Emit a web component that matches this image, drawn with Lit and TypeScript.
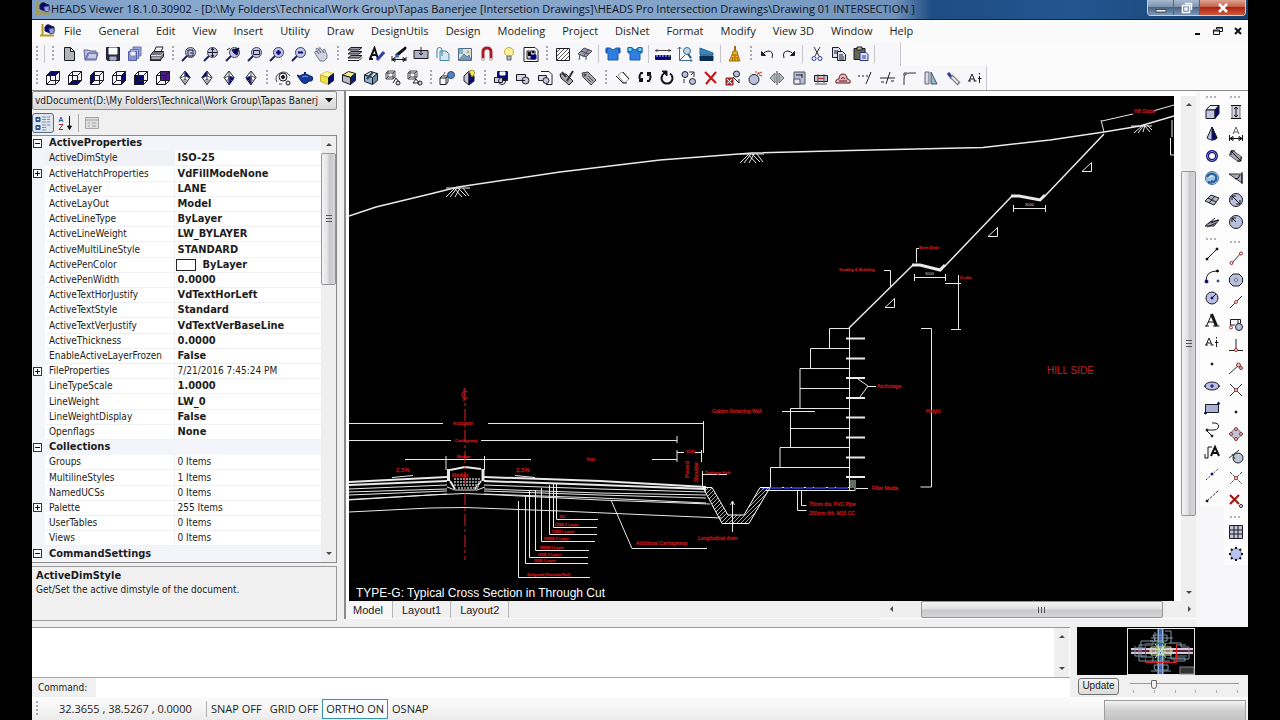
import { LitElement, html, svg, css, TemplateResult, SVGTemplateResult } from "lit";
import { customElement, property } from "lit/decorators.js";
import { classMap } from "lit/directives/class-map.js";

const NAVY = "#06067a";
const PALE = "#b9bfdf";
const INK = "#1c1c26";

type Icon = SVGTemplateResult;

const line = (d: string, color = INK, width = 1): Icon =>
  svg`<path d=${d} fill="none" stroke=${color} stroke-width=${width}></path>`;
const shape = (d: string, fill = PALE, stroke = INK): Icon =>
  svg`<path d=${d} fill=${fill} stroke=${stroke}></path>`;
const disc = (x: number, y: number, r: number, fill = PALE, stroke = INK): Icon =>
  svg`<circle cx=${x} cy=${y} r=${r} fill=${fill} stroke=${stroke}></circle>`;

const cube = (face: string, fill = NAVY): Icon => svg`
  ${shape(face, fill, fill)}
  ${line("M1.5 5.5h9v9h-9zM1.5 5.5l4-4h9v9l-4 4M10.5 5.5l4-4M5.5 1.5v9h9M5.5 10.5l-4 4")}`;
const gem = (face: string): Icon => svg`
  ${shape("M8 1l5 6.500-5 7-5-7z", "#fff")}${shape(face, NAVY, NAVY)}
  ${line("M8 1v14M3 8l5-2 5 2M5 11l3-2 3 2", "#55555f")}`;
const solid = (top: string, front: string, side: string): Icon => svg`
  ${shape("M1.500 5l6-3.500 7 2-5 4z", top)}${shape("M1.500 5l8 2.500v7l-8-3z", front)}${shape("M9.500 7.500l5-4v7l-5 4z", side)}`;
const lens = (inner: Icon): Icon => svg`
  ${line("M1 15l5-5", "#20205a", 2)}${disc(9.5, 6.5, 5, "#c3c8e6", "#3b3b76")}${inner}`;
const tinyA = svg`${line("M2 11l3-7 3 7M3 9h4M1 11h3M6.500 11h3")}${line("M12.500 6v7M11 8.500h3.500M12.500 3v1.500")}`;

const icons: Record<string, Icon> = {
  file: shape("M3.500 1.500h6l4 4v9h-10zM9.500 1.500v4h4", "#b4b4bc"),
  open: svg`${shape("M2 14L1 4h5l1 1h6v2", PALE, "#5c6296")}${shape("M2 14l3-7h10l-2 7z", "#8e96cc", "#5c6296")}${line("M5 3h1M8 2h1M11 3h1M6 9h7M5 11h8", "#fff")}`,
  save: svg`${shape("M1.500 1.500h13v13h-12l-1-1z", "#2c2c3c")}${shape("M4 2h8v6H4z", "#fff", "#fff")}${shape("M5 11h6v3H5z", "#a9aed0", "#a9aed0")}`,
  saveAll: svg`${shape("M6 1h8v9H6z", "#9ca5dc", "#6470ae")}${shape("M3.500 3.500h8v9h-8z", "#a9b1e2", "#6470ae")}${shape("M1.500 5.500h8v9h-8z", "#8791cf", "#5560a0")}${shape("M4 6h4v3H4z", "#eef", "#eef")}`,
  print: svg`${shape("M5 6l2-5h7l-2 5", "#fff")}${shape("M1.500 9l3-3.500h10v5l-3 3.500h-10z", "#76767e")}${line("M2 9.500h10l2.500-3M3 12h8M7 3.500h5", "#dcdce2")}${line("M1 14.500h11")}`,
  zoomWin: lens(line("M7 4h5v6H7zM9 7h2")),
  zoomAll: lens(line("M9.500 2v9M5 6.500h9M8 4l1.500-2L11 4M8 9l1.500 2L11 9")),
  zoomPrev: lens(svg`${shape("M7 4l7-2-2 7-3-2z", NAVY)}${line("M2 4l3-2")}`),
  zoomBox: lens(line("M6.500 4.500h6v4h-6z")),
  zoomIn: lens(line("M7 6.500h5M9.500 4v5", NAVY, 2)),
  zoomOut: lens(line("M7 6.500h5", NAVY, 2)),
  pan: shape("M3 9L1.500 6 3 5l3 3-3-5 1.500-1L8 7 5.500 2.500l1.500-1L11 7l-1-3 1.500-1L14 9v3l-3 3H7z", "#cfd1dd", "#777a8c"),
  layers: svg`${shape("M1 4l3-2.500h11L12 4z", "#9a9ba6")}${shape("M1 8l3-2.500h11L12 8z", "#9a9ba6")}${shape("M1 12l3-2.500h11L12 12z", "#9a9ba6")}${line("M1 14.500h11l3-3")}`,
  textStyle: svg`${line("M1 13L5.500 2 9 13M3 9h5M0 13h4", "#111", 2)}${line("M8 14l7-8", "#2f3fae", 3)}`,
  dimStyle: svg`${line("M5 9l10-8M7 9l8-7", "#111", 2)}${line("M4 10l4 0", "#4a6fc0", 3)}${line("M1 13.500h14M1 10v5M15 11v4M1 13.500l3-2v4zM15 13.500l-3-2v4z")}`,
  block: svg`${shape("M1 4.500h14v8H1z", "#aeb1c6")}${line("M8 1v8M6 7l2 2 2-2")}`,
  attach: svg`${shape("M5 5h6l3 3v6.500H5z", "#d4e6f2", "#4b86a8")}${line("M2 12V4q0-2.500 2.500-2.500T7 4v6", "#2d85a8")}`,
  image: svg`${shape("M1.500 2.500h13v12h-13z", "#d6e4ee", "#566a7c")}${shape("M2 14l5-6 3 3 2-2 2 5z", "#7d9db4", "#5c7c94")}${line("M3 8V3q1-2 2 0v5", "#2d85a8")}${disc(11, 6, 1, "#f6cf59", "#c9a030")}`,
  magnet: svg`${line("M4 14V6q0-4 4-4t4 4v8", "#a3202a", 3)}${line("M4 12v3M12 12v3", "#d7c7cb", 3)}`,
  bulb: svg`${disc(8, 6, 4.5, "#fff39a", "#c4a93c")}${shape("M6 10h4v4H6z", "#b3b7c9", "#666")}`,
  report: svg`${shape("M1 1.500h11l3 3v11H1z", "#fff")}${shape("M4 5h8v8H4z", "#c6cae6")}${shape("M8 9h5v4H8z", NAVY, NAVY)}${line("M5 7h3M5 9h3M9 6h2", "#000", 2)}`,
  hatch: svg`${shape("M1.500 2.500h13v12h-13z", "#fff")}${line("M2 6l3-3M2 10l7-7M2 14L13 3M6 14l8-8M10 14l4-4", "#555")}`,
  plane: svg`${shape("M1 8l6-6 8 3-6 6z", "#9799a8", "#4c4c5c")}${line("M4 5l8 3M6 11L12 3M3 9l-1 5M9 11v3", "#4c4c5c")}`,
  shirt: svg`${shape("M1 2h4l3 2 3-2h4v5h-2v7H3V7H1z", "#2e7fe0", "#1f5ba8")}${line("M3 3l-2 3M13 3l2 3", "#173f80")}`,
  shirt2: svg`${shape("M1 2h4l3 2 3-2h4v5h-2v7H3V7H1z", "#2e7fe0", "#1f5ba8")}${shape("M1 1.500h4v4H1zM11 1.500h4v4h-4z", "#67d9e8", "#1f5ba8")}`,
  ruler: svg`${line("M0 4.500h16M2 3v3M14 3v3", "#444")}${shape("M.5 9.500h15v4H.5z", NAVY)}${line("M2 9v2M5 9v2M8 9v2M11 9v2M14 9v2", "#b7c0ff")}`,
  ucs: svg`${line("M2.500 1v13.500H15M.5 3l2-2 2 2M13 12.500l2 2-2 2M3 14l5-5", "#3b6e93")}${disc(10, 5, 3.5, "#bcd4e6", "#3b6e93")}${line("M11 8l3 4", "#35506c", 2)}`,
  hull: svg`${shape("M1 2l13 5v2H1z", "#3d84b8", "#2b6a98")}${shape("M1 10h13v4.500H1z", "#0b2f55", "#0b2f55")}`,
  broom: svg`${line("M8 0v6", "#a06818", 2)}${shape("M6 5h4l1 4 2 6H2l3-6z", "#f0b429", "#a8720f")}${line("M5 9h6M6 11l-1 4M8 10v5M10 11l1 4", "#8c5a0c")}`,
  undo: svg`${line("M13 12q2-7-4-7-3 0-6 4")}${shape("M2.500 5.500v4h4z", "#223")}`,
  redo: svg`${line("M3 12q-2-7 4-7 3 0 6 4")}${shape("M13.500 5.500v4h-4z", "#223")}`,
  cut: svg`${line("M5 1l5 9M11 1L6 10", "#333")}${disc(5, 12.5, 2, "#fff", "#23318f")}${disc(11, 12.5, 2, "#fff", "#23318f")}`,
  copy: svg`${shape("M1.500 1.500h6l2 2v8h-8z", "#dfe1ea")}${shape("M6.500 5.500h5l3 3v6h-8z", "#dfe1ea")}${line("M3 5h4M3 7h3M8 9h4M8 11h5M8 13h5")}`,
  paste: svg`${shape("M1 2.500h11v11H1z", "#66684f")}${shape("M4 1h5v3H4z", "#b7b99a")}${shape("M7 6.500h6l2 2v6H7z", "#dfe4ff", "#27318a")}${line("M9 10h4M9 12h4", "#27318a")}`,

  cubeTop: cube("M1.500 5.500l4-4h9l-4 4z"),
  cubeBottom: cube("M1.500 14.500l4-4h9l-4 4z"),
  cubeLeft: cube("M1.500 5.500l4-4v9l-4 4z"),
  cubeRight: cube("M10.500 5.500l4-4v9l-4 4z"),
  cubeFront: cube("M1.500 5.500h9v9h-9z"),
  cubeBack: cube("M5.500 1.500h9v9h-9z", "#4a1a8c"),
  gemNE: gem("M8 1l5 6.500-5-1.500z"),
  gemNW: gem("M8 1L3 7.500 8 6z"),
  gemSE: gem("M8 6l5 2-5 7z"),
  gemSW: gem("M8 6L3 8l5 7z"),
  orbit: svg`${line("M2 12Q-1 6 5 3t10 3M4 14h3", "#444")}${disc(8, 7, 4, "#e4e4ea")}${disc(8, 7, 1.5, "#111")}${disc(13, 13, 2, "#ddd")}`,
  teapot: svg`${shape("M2 8l-2-3 3 1q5-4 10 0 3 0 3 3-1 3-4 2-4 5-8 0z", "#183a9a", "#0b1f66")}${line("M5 7q3-2 6 0", "#6c9bea")}${line("M7 3h2", "#0b1f66", 2)}`,
  boxYellow: svg`${shape("M1.500 5l6-3.500 7 2-5 4z", "#fff9a8", "#d8c840")}${shape("M1.500 5l8 2.500v7l-8-3z", "#f2df4e", "#c8b430")}${shape("M9.500 7.500l5-4v7l-5 4z", NAVY)}`,
  boxBlue: solid("#f4ee86", "#b7b9c4", "#0c1c77"),
  boxPen: svg`${solid("#cfe0ea", "#8db4c9", "#6e8ea8")}${line("M4 9l6-7", "#2b4250", 2)}`,
  wire1: svg`${line("M1 3h7v6H1zM1 3l2-2h7L8 3M10 1v6L8 9M3 1v6h7M3 7L1 9", "#444")}${disc(13, 13, 2, "#ddd")}${line("M8 13l3-5 3 4")}`,
  wire2: svg`${line("M1 3h7v6H1zM1 3l2-2h7L8 3M10 1v6L8 9M3 1v6h7M3 7L1 9", "#444")}${disc(13, 13, 2, "#ddd")}${line("M6 13l3-4 3 4z")}`,
  render: svg`${shape("M1 8h6v6.500H1zM1 8l2-2h6v6l-2 2.500M7 8l2-2", "#fff")}${disc(12, 5, 3.5, "#4d86c6", "#274f80")}${line("M11 1l4 3M4 6l2-4", "#b64545")}`,
  shade: svg`${shape("M8 1L3 6v5l5 4z", "#c6c8d6")}${shape("M8 3l5 3v5l-5 4z", NAVY)}${shape("M8 1l4-1 2 3-3 4z", "#f7e660", "#9a8c1e")}`,
  saveBlock: svg`${shape("M4.500 1.500h10v9h-10z", NAVY)}${shape("M7 2h5v3H7z", "#fff", "#fff")}${shape("M1.500 7.500h8v5h-8z", "#cfd1e0")}${disc(9, 11, 3.5, "none")}`,
  blockAdd: svg`${shape("M1.500 4.500h9v6h-9z", "#d4d6e2")}${disc(10.5, 10.500, 3.5, "#c4c6d8")}${line("M1 10.500h9")}`,
  blockCopy: svg`${shape("M4 1.500h8l3 3v10H9", "#fff")}${shape("M1.500 5.500h8v5h-8z", "#d4d6e2")}${disc(9, 10.5, 3, "#c4c6d8")}`,
  tagEdit: svg`${shape("M1 4h6l7 7-4 4-8-7z", "#a5a6b1")}${line("M8 11l6-10M3 2l4 5", "#333", 2)}`,
  tag: svg`${shape("M1 3l6-1 8 8-5 5-8-8z", "#a5a6b1", "#444")}${disc(4, 5, 1, "#fff")}${line("M7 6l5 5M6 8l4 4", "#555")}`,

  erase: svg`${shape("M3 5l4-3 7 7-5 4z", "#fff", "#999")}${line("M1 6l7 7h4M8 2l6 7")}`,
  rotSwap: line("M6 3H4Q1 7 4 11M2 11h3V8M10 11h2q3-4 0-8M14 3h-3v3", "#111", 2),
  rotate: svg`${line("M11 3.500A5.500 5.500 0 1 1 5 3.500", "#111", 2)}${shape("M3 1h5v5z", "#111")}`,
  moveObj: svg`${disc(4, 4.500, 3)}${disc(11.500, 11.500, 3)}${line("M8 2h5v5M13 2l-3 3M3 9v4", "#333")}`,
  delete: line("M2 2l11 11M13 2L3 14", "#c01616", 2),
  delCopy: svg`${disc(11.500, 4, 3)}${line("M8 7l6 6M14 9v4")}${shape("M1 8h7v7H1z", "#c33", "#822")}${line("M2 9l5 5M7 9l-5 5", "#fff")}`,
  explode: svg`${disc(7, 9.5, 5)}${line("M10 5l2-3M11 4l4-2M12 5l3 1M9 3V1", "#b53a20")}`,
  mirror: svg`${shape("M6 3v10L1 8z", "#a9bfb8", "#667")}${shape("M10 3v10l5-5z", "#a9bfb8", "#667")}${line("M8 1v14", "#333")}`,
  scale: svg`${shape("M3 2h11v12H3z", "#b5bdd0", "#556")}${shape("M3 9h6v5H3z", "#e8ebf4", "#556")}${line("M11 4v4M5 5h6")}`,
  stretch: svg`${shape("M1.500 5.500h13v6h-13z", "#c0c1ce")}${line("M5 4v9M11 4v9M2 14h12", "#555")}${line("M5 8.500h6", "#b33")}`,
  offset: svg`${shape("M1 13q-1-4 3-4 0-5 4-5t4 5q4 0 3 4z", "#e8b8bc", "#5b1c24")}${line("M4 11h8M6 9q2-3 4 0", "#5b1c24")}`,
  trim: line("M1 6h2M5 6h2M9 6h2M9 14l5-12", "#222", 1),
  extend: line("M1 8h15M7 14l4-12M2 12h3M12 11h3", "#222", 1),
  fillet: line("M3 15V9q0-6 6-6h6M3 3h3M3 3v3", "#333"),
  chamfer: svg`${shape("M2 2h4v12H2z", "#d7dae6", "#667")}${shape("M8 2l6 12H8z", "#8fb8c8", "#456")}`,
  pencil: svg`${line("M3 3l4 5", "#2b3c9b", 3)}${line("M6 6l8 8", "#777", 4)}${line("M7 7l6 6", "#e8e8ee", 2)}`,
  attrText: tinyA,

  box3d: svg`${shape("M2 6l4-4.500h9l-4 4.500z", "#e8eaf6")}${shape("M2 6h9v8.500H2z", "#c2c6e4")}${shape("M11 6l4-4.500v8l-4 5z", NAVY)}`,
  cone: svg`${shape("M8 1L3 12q5 4 10 0z", "#b9bfdf")}${shape("M8 1l5 11q-2 2-5 2z", NAVY)}`,
  torus: svg`<circle cx="8" cy="8" r="4.500" fill="none" stroke=${NAVY} stroke-width="3"></circle><circle cx="8" cy="8" r="4.500" fill="none" stroke="#8c93d2" stroke-width="1"></circle>`,
  sphere: svg`${disc(8, 8, 6.500, "#9fc4e4", "#41729e")}${line("M3 7q2-4 6-3t3 5-5 2M4 12q5 2 9-3", "#2a5d92", 2)}${line("M5 8q1-3 4-2", "#eef7ff")}`,
  mesh: svg`${shape("M1 9l6-6 8 3-5 7z", "#b4b6c4")}${line("M4 6l8 4M5 11l6-7")}`,
  ruled: svg`${shape("M1 12l5-4 9-2-5 6z", "#a8aab6")}${line("M4 10l7-6M7 9l7-3M3 13l9-4")}`,
  segment: svg`${line("M3 13L13 3")}${disc(3, 13, 1, "#000", "#000")}${disc(13, 3, 1, "#000", "#000")}`,
  arc: svg`${line("M2 13Q2 3 13 3")}${disc(2.500, 13.500, 1.500, NAVY, NAVY)}${disc(14, 13, 1, "#34408f", "#34408f")}${disc(13.500, 3, 1, "#000", "#000")}`,
  circle: svg`${disc(8, 8, 6)}${line("M8 8l4-4", NAVY)}${disc(8, 8, 1, NAVY, NAVY)}`,
  letterA: svg`${line("M2.500 14L7.500 2.500M1 14h4M9 14h6.500M4 10h7", "#111", 1)}${line("M7.500 2l5 12", "#111", 3)}`,
  point: disc(8, 8, 1, "#111", "#111"),
  ellipse: svg`<ellipse cx="8" cy="8" rx="7" ry="4" fill=${PALE} stroke="#1c1c26"></ellipse>${line("M8 6v4M6 8h4", NAVY)}${disc(1, 8, 0.5)}${disc(15, 8, 0.5)}`,
  rect: svg`${shape("M1.500 4.500h13v8h-13z", "#aab2d2")}${disc(14.500, 3.500, 1, NAVY, NAVY)}${disc(1.500, 13, 1, NAVY, NAVY)}`,
  poly: svg`${line("M8 1h3q5 1 3 5-1 2-4 2H2l6 6")}${disc(3, 8, 1, "#111")}${disc(8, 14, 1, "#111")}`,
  mtext: svg`${line("M1 10v4h3V3h4", "#111", 1)}${line("M7 12l4-9 4 9M8 9h6", "#111", 2)}`,
  xline: svg`<path d="M2 14L15 2" stroke="#333" stroke-dasharray="2 1.500"></path>${disc(8, 8, 1, NAVY, NAVY)}`,
  ray: svg`<path d="M3 13L15 2" stroke="#333" stroke-dasharray="3 1"></path>${disc(3, 13, 1, "#111", "#111")}`,

  dimV: svg`${shape("M4 1.500h8v13H4z", "#cfd1e0", "#777")}${line("M3 1.500h10M3 14.500h10M8 3v10M6 5l2-2 2 2M6 11l2 2 2-2", "#111")}`,
  dimH: svg`${line("M5 8l3-7 3 7M6 6h4", "#666")}${line("M1.500 9v6M14.500 9v6M2 12.500h12", "#111")}${line("M2 12.500l3-2v4zM14 12.500l-3-2v4z", "#111")}`,
  dimA: svg`${shape("M4 2l10 7-3 5L1 7z", "#a5a6b4", "#666")}${line("M3 3l10 10", "#111")}${line("M3 3h4M3 3v4M13 13H9M13 13V9", "#111")}`,
  dimAng: svg`${shape("M1 4h13v9z", "#a9abbb", "#333")}${line("M14 2v12M7 9q4 0 5-4", "#111")}`,
  dimDia: svg`${disc(8, 8, 6.5)}${line("M4 4l8 8M4 4h4M4 4v4M12 12H8M12 12V8", "#111")}`,
  dimRad: svg`${disc(8, 8, 6.5)}${line("M4 4l4 4M4 4h4M4 4v4", "#111")}`,
  snapEnd: svg`${line("M4 13l9-10", "#333")}${disc(3.500, 13, 1.5, "#fff", "#922")}${disc(13, 3.500, 1.500, "#fff", "#922")}`,
  snapCen: svg`${shape("M5 2h6l3.500 3.500v5L11 14H5l-3.500-3.500v-5z")}${disc(8, 8, 1.500, "#fff", "#666")}`,
  snapMid: svg`${line("M2 14L14 2", "#333")}${disc(8, 8, 1.5, "#f0d8c8", "#a55")}`,
  snapIns: svg`${line("M2.500 9V3.500h10v4M2 9h5M10 4v5")}${disc(3, 11.500, 1.500, "#fff", "#a33")}${disc(11, 11, 3.500)}`,
  snapPer: svg`${line("M8 1v10M1 12.500h14", "#222")}${disc(8, 12, 1.500, "#fff", "#922")}`,
  snapNear: svg`${line("M1 14l10-9", "#333")}${disc(10.500, 5, 2, "#e0c4c8", "#833")}${disc(13, 8, 1.500, "#e0c4c8", "#833")}`,
  snapInt: svg`${line("M2 2l12 12M14 2L2 14", "#333")}${disc(8, 8, 1.500, "#f6ead8", "#a33")}`,
  snapQuad: svg`${shape("M8 1.500l6.500 6.500L8 14.500 1.500 8z", "#c2c0d2", "#666")}${[[8, 3], [3, 8], [13, 8], [8, 13]].map(([x, y]) => disc(x, y, 1.5, "#e8d0d4", "#833"))}`,
  snapTan: svg`${disc(10, 10, 5, "#b9c7d6")}${line("M1 10L11 2M4 6l3 5", "#333")}`,
  snapApp: svg`<path d="M2 2l12 12M14 2L2 14" stroke="#444" stroke-dasharray="3 1"></path>${disc(8, 8, 1.500, "#f6ead8", "#a33")}`,
  snapOff: svg`${line("M2 3l9 9M11 3l-9 9", "#a01212", 2)}${disc(13, 14, 1.5, "#fff")}`,
  grid: svg`${shape("M1.500 1.500h13v13h-13z", "#c3c5d8")}${line("M6 2v12M10 2v12M2 6h12M2 10h12")}`,
  osnap: svg`${disc(8, 8, 5.500, "#b9c3ee", "#8d96c4")}${[0, 45, 90, 135, 180, 225, 270, 315].map(
    (a) => svg`<rect x="7" y="1" width="2" height="2" fill="#111" transform="rotate(${a} 8 8)"></rect>`)}`,
  categories: svg`${shape("M1 2.500h4v4H1zM1 10.500h4v4H1z", "#3f6aa8", "#254a80")}${line("M7 2h4M7 4.500h4M7 7h4M7 10h4M7 12.500h4M7 15h4M12 2h3M12 4.500h3M12 7h3M12 10h3", "#7690b4")}${line("M2 4.500h2M2 12.500h2", "#fff")}`,
  alpha: svg`${line("M2 7l2-5 2 5M3 5.500h2", "#2f55b8")}${line("M2 9.500h4L2 14.500h4", "#a8263a")}${line("M12.500 1v13", "#111", 1)}${shape("M10.500 11h4l-2 3.500z", "#111")}`,
  pages: svg`${shape("M1.500 2.500h13v11h-13z", "#dedede", "#a4a4a4")}${line("M1 5h14M4 8h2M8 8h4M4 11h2M8 11h4", "#a4a4a4")}`,
  logo: svg`${line("M3.500 1v11.500M1 12.500h14", "#b89a1c", 2)}${shape("M6 4q2-4 6-1l3 1v5l-4 1-5-2z", NAVY)}${shape("M10 6l5-1v5l-4 1z", "#8fa0dd", "#46509a")}`,
};

const glyph = (name: string): TemplateResult =>
  html`<svg viewBox="0 0 16 16" width="16" height="16" aria-hidden="true">${icons[name]}</svg>`;

@customElement("tool-strip")
class ToolStrip extends LitElement {
  @property({ attribute: false }) items: string[] = [];
  @property({ type: Boolean, reflect: true }) vertical = false;

  static styles = css`
    :host { display: flex; align-items: center; }
    :host([vertical]) { flex-direction: column; background: #fcfcfd; }
    button {
      width: 22px; height: 22px; padding: 3px; border: 0; background: none; display: block; flex: none;
    }
    svg { display: block; }
    .grip { flex: none; box-sizing: border-box; width: 10px; height: 16px; padding: 0 4px; }
    .grip.wide { width: 12px; padding: 0 5px; }
    .grip::before {
      content: ""; display: block; width: 2px; height: 16px;
      background: repeating-linear-gradient(#a9a9ad 0 2px, transparent 2px 4px);
    }
    :host([vertical]) .grip { width: 12px; height: 10px; padding: 5px 0 3px; }
    :host([vertical]) .grip.wide { height: 14px; padding: 8px 0 4px; }
    :host([vertical]) .grip::before {
      width: 11px; height: 2px;
      background: repeating-linear-gradient(90deg, #b4b4b8 0 2px, transparent 2px 4px);
    }
    .bar { width: 1px; height: 18px; background: #c4c4c9; margin: 0 3px 0 2px; flex: none; }
  `;

  render() {
    return this.items.map((item) =>
      item === ":" ? html`<span class="grip"></span>`
      : item === "::" ? html`<span class="grip wide"></span>`
      : item === "|" ? html`<span class="bar"></span>`
      : html`<button type="button" aria-label=${item}>${glyph(item)}</button>`);
  }
}

@customElement("scroll-rail")
class ScrollRail extends LitElement {
  @property({ type: Boolean, reflect: true }) horizontal = false;
  @property({ type: Boolean }) idle = false;
  @property({ type: Number }) before = 0;
  @property({ type: Number }) size = 1;
  @property({ type: Number }) after = 1;

  static styles = css`
    :host { display: flex; flex-direction: column; width: 15px; background: #efeff0; flex: none; }
    :host([horizontal]) { flex-direction: row; width: auto; height: 17px; }
    button { border: 0; background: none; padding: 0; width: 15px; height: 17px; flex: none; display: grid; place-items: center; }
    .space { min-height: 0; min-width: 0; }
    .thumb {
      box-sizing: border-box; border: 1px solid #969699; border-radius: 2px; display: grid; place-items: center;
      background: linear-gradient(90deg, #f4f4f4, #e2e2e3 45%, #c9c9cc 55%, #d6d6d8);
    }
    :host([horizontal]) .thumb { background: linear-gradient(#f4f4f4, #e2e2e3 45%, #c9c9cc 55%, #d6d6d8); }
    .ribs { width: 6px; height: 8px; background: repeating-linear-gradient(#555 0 1px, transparent 1px 3px); }
    :host([horizontal]) .ribs { width: 8px; height: 6px; background: repeating-linear-gradient(90deg, #555 0 1px, transparent 1px 3px); }
  `;

  render() {
    const [a, b] = this.horizontal ? ["M5 0v6L2 3z", "M2 0v6l3-3z"] : ["M0 5h6L3 2z", "M0 2h6L3 5z"];
    const arrow = (d: string) => html`<svg width="6" height="7" aria-hidden="true"><path d=${d} fill="#4a4a4e"></path></svg>`;
    return html`
      <button type="button" aria-label="Scroll back">${arrow(a)}</button>
      <span class="space" style="flex:${this.before}"></span>
      ${this.idle ? "" : html`<span class="thumb" style="flex:${this.size}"><span class="ribs"></span></span>`}
      <span class="space" style="flex:${this.after}"></span>
      <button type="button" aria-label="Scroll forward">${arrow(b)}</button>`;
  }
}

const white = (d: string, width = 1) => svg`<path class="ln" d=${d} stroke-width=${width}></path>`;
const note = (x: number, y: number, text: string, size = 5) =>
  svg`<text class="note" x=${x} y=${y} font-size=${size}>${text}</text>`;

const layerNotes: [number, number, number, number, number, string][] = [
  [556.5, 483, 519.5, 598, 560, "BC"],
  [553.5, 484, 527.5, 597, 555, "DBM II Layer"],
  [549.5, 485, 534.5, 597, 552, "DBM I Layer"],
  [541.5, 488, 541.5, 595, 544, "WMM II Layer"],
  [535.5, 490, 550.5, 589, 540, "WMM I Layer"],
  [529.5, 491, 557.5, 588, 538, "GSB II Layer"],
  [525.5, 496, 563.5, 588, 534, "GSB I Layer"],
  [518.5, 501, 577.5, 590, 527, "Subgrade(Granular/Soil)"],
];
const groundMark = (x: number, y: number) =>
  white(`M${x - 12} ${y + 2}h24M${x - 12} ${y + 11}l9-9M${x - 8} ${y + 11}l7-9M${x - 3} ${y + 11}l5-9M${x - 4} ${y + 2}l8 9M${x} ${y + 2}l8 8M${x + 5} ${y + 2}l6 8`);
const roadLayers: [number, number, number, number][] = [
  [482, 477, 487, 2], [485, 481, 489, 2], [489, 485, 492, 1], [492, 489, 495, 1],
  [495, 491, 498, 1], [500, 494, 503, 1],
];

const drawing = svg`
  ${white("M349 216L376 207 430 194 458 187 560 172 660 160 752 153 850 150.500 983 147.500 1050 140 1104 132 1140 126 1174 116", 1.500)}
  ${groundMark(458, 186)}${groundMark(752, 152)}
  ${white("M1134 133l9-8M1138 133l6-8M1143 132l2-7M1131 126h21M1144 125l6 7M1147 125l5 5")}
  ${white("M1101 120l3 12M1102 121l31-7M1153 111l21-6M1172 120v17M1170.500 138v17h4")}
  ${note(1134, 113, "Hill Slope")}
  ${white("M849 328L913 265M945 266L1012 196M1045 196L1104 134", 1.500)}
  ${white("M912 265h8l20 5 5-5M1011 196h8l21 4 5-5", 3)}
  ${white("M1082 171.500h9.500v-9zM988 236.500h9.500v-9zM885 307.500h9.500v-9z")}
  ${white("M1014 208.500h31M1013.500 205v7M1045.500 205v7M915 277.500h30M914.500 274v7M945.500 274v7")}
  <text class="dim" x="1025" y="206" font-size="4">3000</text>
  <text class="dim" x="925" y="275" font-size="4">3000</text>
  ${note(839, 271, "Seeding & Mulching", 4)}${white("M884 270.500h6.500v16")}
  ${note(919, 249, "Berm Drain", 4)}${white("M919 248.500h-2.500v14")}
  ${note(960, 279, "H =4m", 4)}${white("M958.500 275v54M945 283.500h16M951 329.500h10M921 328.500h10.500v158.500h-11")}
  ${note(926, 413, "Height", 5)}
  <text class="hill" x="1047" y="374" font-size="10">HILL SIDE</text>
  ${white("M849.500 328v162M829.500 348v-19.500h20M810.500 368v-19.500h39M800 408v-39.500h49.500M800 388.500h49M790.500 447v-38.500h59M790 428.500h59M780 467v-19.500h69M770.500 487v-19.500h79")}
  ${white("M846 338.500h19M846 358.500h19M846 378h19M846 398h19M846 417.500h19M846 437.500h19M846 457.500h19M846 477h19", 2)}
  ${white("M858 379l10 7-8 11M868 386.500h8")}${note(877, 388, "Anchorage", 5)}
  ${note(712, 413, "Gabion Retaining Wall", 5)}${white("M782 411.500h33")}
  ${white("M761 487.500h88M766 490.500h89v-6M856 488.500h12")}
  <path d="M762 489l4-1h84" fill="none" stroke="#2432b0" stroke-width="2" stroke-dasharray="7 1 12 2"></path>
  <rect x="850" y="480" width="6" height="8" fill="#5e6e60"></rect>
  ${note(872, 490, "Filter Media", 5)}
  ${white("M797.500 491v19.500h9M801.500 491v14.500h5")}
  ${note(809, 506, "75mm dia. PVC Pipe", 5)}${note(809, 515, "250mm thk. M15 CC", 5)}
  ${white("M349 423.500h94M488 423.500h216M703.500 421v32M349 440.500h102M481 440.500h196M677 436v7M405 459.500h126M446 456v14M484.500 456v14M652 459.500h25M677 450v12M677 452.500h7M695 452.500h6M701.500 450v12")}
  ${note(453, 425, "ROADWAY", 4)}${note(455, 442, "Carriageway", 4)}${note(457, 458, "Median", 4)}${note(586, 461, "7500", 4)}${note(686, 453, "1500", 4)}
  <text class="note" transform="translate(689 478) rotate(-90)" font-size="6">Paved</text>
  <text class="note" transform="translate(698 482) rotate(-90)" font-size="5">Shoulder</text>
  ${note(396, 472, "2.5%", 6)}${note(516, 472, "2.5%", 6)}${white("M392 477.500l21-2M515 475.500l20 2")}
  ${roadLayers.map(([l, m, r, w]) => white(`M349 ${l}L${447} ${m}M484 ${m}L600 ${m + 4}L706 ${r}`, w))}
  ${white("M349 499.500L430 495 465 493.500 500 495 600 500 710 504M349 512L430 508 465 507.500 560 511 650 515 722 518M447 487l8 3h22l8-3")}
  ${white("M448.500 469v12M483 469v12", 3)}${white("M450 470l15-3 16 2M450 481l5 8M481 481l-6 8", 2)}
  <path d="M454 479h25v3h-24v3h23v3h-20" fill="none" stroke="#8b8b8b" stroke-width="2" stroke-dasharray="2 1"></path>
  ${note(452, 477, "Median", 5)}
  ${layerNotes.map(([x, top, bottom, end, tx, text]) => svg`${white(`M${x} ${top}V${bottom}H${end}`)}${note(tx, bottom - 2, text, 4)}`)}
  <path d="M465 388V560" stroke="#e02020" fill="none" stroke-dasharray="12 3 3 3"></path>
  <path d="M468 392q-6-2-6 3t6 3M464 388v14" stroke="#c01818" fill="none"></path>
  ${white("M611 500L632 548.500H707")}${note(636, 545, "Additional Carriageway", 5)}
  ${white("M702.500 471v16M703 474.500h24")}${note(705, 474, "Drainage Hole", 4)}
  <path d="M703 487.500H712L728 515H744L760 487.500H770L749 523.500H722z" fill="url(#dash)" stroke="#fff"></path>
  ${white("M732.500 501v31M730.500 505l2-4 2 4")}${note(698, 540, "Longitudinal drain", 5)}
`;

type Row = [string, string?, ("group" | "plain" | "more" | "color")?, boolean?];
const rows: Row[] = [
  ["ActiveProperties", undefined, "group"],
  ["ActiveDimStyle", "ISO-25"],
  ["ActiveHatchProperties", "VdFillModeNone", "more"],
  ["ActiveLayer", "LANE"],
  ["ActiveLayOut", "Model"],
  ["ActiveLineType", "ByLayer"],
  ["ActiveLineWeight", "LW_BYLAYER"],
  ["ActiveMultiLineStyle", "STANDARD"],
  ["ActivePenColor", "ByLayer", "color"],
  ["ActivePenWidth", "0.0000"],
  ["ActiveTextHorJustify", "VdTextHorLeft"],
  ["ActiveTextStyle", "Standard"],
  ["ActiveTextVerJustify", "VdTextVerBaseLine"],
  ["ActiveThickness", "0.0000"],
  ["EnableActiveLayerFrozen", "False"],
  ["FileProperties", "7/21/2016 7:45:24 PM", "more", true],
  ["LineTypeScale", "1.0000"],
  ["LineWeight", "LW_0"],
  ["LineWeightDisplay", "False"],
  ["Openflags", "None"],
  ["Collections", undefined, "group"],
  ["Groups", "0 Items", "plain"],
  ["MultilineStyles", "1 Items", "plain"],
  ["NamedUCSs", "0 Items", "plain"],
  ["Palette", "255 Items", "more", true],
  ["UserTables", "0 Items", "plain"],
  ["Views", "0 Items", "plain"],
  ["CommandSettings", undefined, "group"],
];

const menus = ["File", "General", "Edit", "View", "Insert", "Utility", "Draw", "DesignUtils", "Design",
  "Modeling", "Project", "DisNet", "Format", "Modify", "View 3D", "Window", "Help"];

const standardTools = [":", "|", ":", "file", "open", "save", "saveAll", "print", ":", "zoomWin", "zoomAll", "zoomPrev",
  "zoomBox", "zoomIn", "zoomOut", "pan", "::", "layers", "textStyle", "dimStyle", "block", "attach", "image", "magnet",
  "bulb", "report", ":", "hatch", "plane", "|", "shirt", "shirt2", "|", "ruler", "ucs", "hull", "|", "broom", ":",
  "undo", "redo", "|", "cut", "copy", "paste", "|"];
const modifyTools = [":", "cubeTop", "cubeBottom", "cubeLeft", "cubeRight", "cubeFront", "cubeBack", "gemNE", "gemNW",
  "gemSE", "gemSW", ":", "orbit", "teapot", "boxYellow", "boxBlue", "boxPen", "wire1", "wire2", ":",
  "render", "shade", ":", "saveBlock", "blockAdd", "blockCopy", "tagEdit", "tag", "::", "erase", "rotSwap", "rotate",
  "moveObj", "delete", "delCopy", "explode", "mirror", "scale", "stretch", "offset", "trim", "extend", "fillet",
  "chamfer", "pencil", "attrText"];
const drawTools = [":", "box3d", "cone", "torus", "sphere", "mesh", "ruled", ":", "segment", "arc", "circle", "letterA",
  "attrText", "point", "ellipse", "rect", "poly", "mtext", "xline", "ray"];
const snapTools = [":", "dimV", "dimH", "dimA", "dimAng", "dimDia", "dimRad", "::", "snapEnd", "snapCen", "snapMid",
  "snapIns", "snapPer", "snapNear", "snapInt", "point", "snapQuad", "snapTan", "snapApp", "snapOff", ":", "grid", "osnap"];

@customElement("app-root")
class AppRoot extends LitElement {
  static styles = css`
    :host {
      display: block; height: 100vh; padding: 0 32px; box-sizing: border-box; background: #000; overflow: hidden;
      font: 11px/16px "Open Sans", "Noto Sans", sans-serif; color: #1c1c20;
    }
    * { box-sizing: border-box; }
    button, input, select { font: inherit; color: inherit; margin: 0; border-radius: 0; }
    svg { display: block; }
    .window { height: 100%; display: flex; flex-direction: column; background: #f0f0f0; }

    .title {
      height: 20px; flex: none; display: flex; align-items: flex-start; padding: 0 2px; gap: 1px;
      border-bottom: 1px solid #12233c;
      background: linear-gradient(90deg, #7f9fc6, #91aed0 25%, #7fa0c6 60%, #6f92bb 71%, #1f4c83 74%, #235690 86%, #16406f);
    }
    .title h1 { margin: 0; font-size: 11px; line-height: 18px; font-weight: 400; flex: 1; white-space: nowrap; overflow: hidden; color: #10131c; }
    .title svg { margin-top: 1px; }
    .captions { display: flex; border: 1px solid #c7d3e2; border-top: 0; border-radius: 0 0 4px 4px; overflow: hidden; height: 16px; }
    .captions button {
      border: 0; border-right: 1px solid #50647f; padding: 0; width: 26px; display: grid; place-items: center;
      background: linear-gradient(#a9bad0, #7d93b0 45%, #4a6486 50%, #7d97b6);
    }
    .captions .close { width: 45px; border: 0; background: linear-gradient(#dba293, #c8604b 45%, #ac2313 50%, #cf5a3c); }

    .menu { height: 22px; flex: none; display: flex; align-items: center; background: #fafafb; padding: 0 0 0 7px; }
    .menu button { border: 0; background: none; padding: 0 8px 0 9px; line-height: 22px; white-space: nowrap; }
    .menu .items { display: flex; flex: 1; }
    .menu .mdi { padding: 0 5px; }

    .band { background: #fbfbfc; flex: none; height: 24px; display: flex; }
    .band tool-strip { border-right: 1px solid #c9c9ce; background: #f7f7f9; }
    .band .first { padding-right: 22px; }

    .main { flex: 1; min-height: 0; display: flex; border-top: 1px solid #8c8c8c; }
    .side { width: 305px; flex: none; display: flex; flex-direction: column; font: 10px/14px "DejaVu Sans Condensed", "DejaVu Sans", sans-serif; }
    .combo {
      height: 19px; width: 100%; border: 1px solid #8e8f90; border-radius: 2px; padding: 0 18px 0 2px; appearance: none; flex: none;
      background: linear-gradient(#f5f5f5, #e6e6e6 48%, #d8d8d8);
    }
    .picker { position: relative; display: flex; }
    .picker svg { position: absolute; right: 4px; top: 7px; pointer-events: none; }
    .modes { display: flex; align-items: center; height: 25px; flex: none; }
    .modes button { width: 22px; height: 20px; border: 1px solid transparent; background: none; padding: 1px 2px; }
    .modes button.on { border-color: #5a6a7c; border-radius: 3px; background: #dfe5ec; }
    .modes i { width: 1px; height: 18px; background: #aaa; margin: 0 2px; }
    .gridbox { flex: 1; min-height: 0; display: flex; border: 1px solid #8b8b8b; border-left: 0; background: #fff; }
    table { flex: 1; height: 100%; border-collapse: collapse; table-layout: fixed; }
    col.gutter { width: 13px; }
    col.name { width: 129px; }
    th, td { padding: 0; text-align: left; font-weight: 400; line-height: 14px; white-space: nowrap; overflow: hidden; border-bottom: 1px solid #f0f1f5; }
    .gutter-cell, .group th, .group td { background: #f3f5fa; border-color: #f3f5fa; }
    th { padding-left: 4px; }
    td.value { padding-left: 3px; border-left: 1px solid #f0f1f5; font: bold 11px/14px "DejaVu Sans Condensed", "DejaVu Sans", sans-serif; }
    td.value.plain { font-weight: 400; font-size: 10px; }
    .group th { font-weight: 700; font-size: 11px; }
    .current th { background: #f0f2f6; }
    .toggle { width: 9px; height: 9px; padding: 0; border: 1px solid #333; background: #fff; display: grid; place-items: center; margin-left: 1px; }
    .swatch { display: inline-block; width: 20px; height: 12px; border: 1px solid #222; background: #fff; vertical-align: middle; margin: 0 7px 0 -2px; }
    .help { height: 55px; flex: none; margin: 3px 0 6px; border: 1px solid #999; border-left: 0; padding: 2px 4px; }
    .help h2 { margin: 0; font-size: 11px; line-height: 14px; }
    .help p { margin: 0; }

    .doc { flex: 1; min-width: 0; margin: 0 0 8px 7px; border: 2px solid #8a8a8a; border-width: 0 0 0 2px; background: #fff; display: flex; flex-direction: column; }
    .view { flex: 1; min-height: 0; display: flex; padding: 5px 0 0 3px; }
    .canvas { flex: 1; min-width: 0; background: #000; margin-right: 7px; }
    .canvas svg { width: 100%; height: 100%; }
    .ln { fill: none; stroke: #eaeaea; }
    text { font-family: "Liberation Sans", sans-serif; fill: #fff; }
    .note { fill: #c81a1a; stroke: #b01414; stroke-width: 0.3; }
    .hill { fill: #c02020; }
    .dim { fill: #ddd; }
    .foot { display: flex; height: 18px; flex: none; background: #f0f0f0; border-bottom: 1px solid #fff; }
    .tab { border: 0; border-right: 1px solid #b5b5b5; background: none; padding: 0 9px; font: 11px/16px "Liberation Sans", sans-serif; }
    .tab.on { background: #f7f7f7; padding: 0 9px 0 7px; }
    .foot scroll-rail { width: 313px; margin-left: auto; }

    .dock { display: flex; padding-left: 4px; background: #f6f6f8; flex: none; align-items: flex-start; }
    .dock tool-strip { width: 24px; }

    .bottom { display: flex; flex: none; height: 70px; gap: 7px; }
    .console { flex: 1; min-width: 0; display: flex; flex-direction: column; border-top: 1px solid #9b9b9b; }
    .history { flex: 1; background: #fff; display: flex; justify-content: flex-end; border-bottom: 1px solid #a6a6a6; }
    .history scroll-rail { margin-right: 1px; }
    .prompt { display: flex; height: 19px; align-items: center; }
    .prompt label { width: 64px; padding-left: 6px; font: 10px/16px "DejaVu Sans Condensed", sans-serif; }
    .prompt input { flex: 1; min-width: 0; height: 19px; border: 0; background: #fff; }
    .preview { width: 171px; flex: none; display: flex; flex-direction: column; }
    .preview .map { background: #000; height: 48px; display: grid; justify-content: center; padding-right: 3px; }
    .preview .ctl { display: flex; align-items: center; height: 22px; padding: 0 9px 0 1px; gap: 11px; }
    .update { width: 41px; height: 17px; padding: 0; border: 1px solid #707070; border-radius: 3px; background: linear-gradient(#f4f4f4, #dcdcdc); font: 10px/14px "Liberation Sans", sans-serif; }
    .slide { flex: 1; min-width: 0; display: flex; flex-direction: column; }
    .slide input { appearance: none; width: 100%; height: 11px; background: linear-gradient(#999, #999) 0 4px / 100% 1px no-repeat; }
    .slide input::-webkit-slider-thumb { appearance: none; width: 6px; height: 9px; border: 1px solid #666; border-radius: 1px 1px 3px 3px; background: #f4f4f4; margin-top: -1px; }
    .ticks { display: flex; justify-content: space-between; padding: 0 1px 0 3px; }
    .ticks i { width: 1px; height: 3px; background: #b0b0b0; }

    .status { height: 23px; flex: none; display: flex; align-items: center; background: linear-gradient(#fcfcfc, #ececec); padding-right: 2px; }
    .status output { width: 165px; padding-left: 17px; border-right: 1px solid #b0b0b0; white-space: nowrap; }
    .status button { border: 1px solid transparent; background: none; padding: 0 3px; height: 20px; line-height: 18px; white-space: nowrap; }
    .status button.on { border-color: #3c8fae; background: #f6fbfd; }
    .status .meter { margin-left: auto; align-self: flex-end; width: 142px; height: 20px; border: 1px solid #9e9e9e; border-bottom: 0; background: linear-gradient(#f3f3f3, #d0d0d0 50%, #c2c2c2); }
  `;

  private row([name, value, kind, plain]: Row) {
    const group = kind === "group";
    const open = group || kind === "more";
    return html`<tr class=${classMap({ group, current: name === "ActiveDimStyle" })}>
      <td class="gutter-cell">${open ? html`<button class="toggle" type="button" aria-label="Expand ${name}">
        <svg width="7" height="7"><path d=${group ? "M1 3.5h5" : "M1 3.5h5M3.5 1v5"} stroke="#111"></path></svg></button>` : ""}</td>
      ${group ? html`<th scope="colgroup" colspan="2">${name}</th>` : html`
        <th scope="row">${name}</th>
        <td class=${classMap({ value: true, plain: kind === "plain" || !!plain })}>${kind === "color" ? html`<span class="swatch"></span>` : ""}${value}</td>`}
    </tr>`;
  }

  private miniMap() {
    return html`<svg width="68" height="48" aria-label="Drawing preview">
      <rect x="0.500" y="1.500" width="67" height="46" fill="#000" stroke="#e8e8e8"></rect>
      <path d="M4 22h62M4 26h62" stroke="#d8c8e0" stroke-width="2"></path>
      <path d="M4 24h62" stroke="#b43a6c"></path>
      <path d="M31.500 2v45M35.500 2v45" stroke="#98b8e0" stroke-width="2"></path>
      <path d="M33.500 2v45" stroke="#4466c8"></path>
      <path d="M26 8h14v6H28zM24 11h22M38 4h6v12M12 18h14v-4H14v16h12v4H12zM42 16h12v4h8v12H44v-6M50 18h9M27 38h14v5H28zM24 44h20M25 34h18M28 5v10M23 14h12M40 31h18v3H46M8 19v10h12M9 21h10M48 29h12" fill="none" stroke="#7f99a8"></path>
      <path d="M24 20h20v8H24zM28 17l11 14M39 17L28 31M22 24h24M29 22h9v5h-9z" fill="none" stroke="#d8e8a0"></path>
      <path d="M30 16h8v16h-8z" fill="none" stroke="#54b070" stroke-dasharray="2 1"></path>
      <path d="M18.500 16.500h31v19h-31z" fill="none" stroke="#d22"></path>
      <rect x="53" y="40" width="14" height="7" fill="#333" stroke="#888"></rect>
    </svg>`;
  }

  render() {
    return html`<div class="window">
      <header class="title">
        ${glyph("logo")}
        <h1>HEADS Viewer 18.1.0.30902 - [D:\\My Folders\\Technical\\Work Group\\Tapas Banerjee [Intersetion Drawings]\\HEADS Pro Intersection Drawings\\Drawing 01 INTERSECTION ]</h1>
        <div class="captions">
          <button type="button" aria-label="Minimize"><svg width="12" height="10"><path d="M1 6.500h10v2.500H1z" fill="#fff" stroke="#444"></path></svg></button>
          <button type="button" aria-label="Restore"><svg width="12" height="12"><path d="M4 1.500h6.500V8M1.500 3.500h7v7h-7zM4 6h2v2H4z" fill="none" stroke="#fff" stroke-width="1.500"></path></svg></button>
          <button type="button" class="close" aria-label="Close"><svg width="12" height="10"><path d="M2 1l8 8M10 1L2 9" stroke="#fff" stroke-width="2.500"></path></svg></button>
        </div>
      </header>
      <nav class="menu">
        ${glyph("logo")}
        <div class="items">${menus.map((m) => html`<button type="button">${m}</button>`)}</div>
        <button type="button" class="mdi" aria-label="Minimize drawing"><svg width="10" height="10"><path d="M2 8h5" stroke="#111" stroke-width="2"></path></svg></button>
        <button type="button" class="mdi" aria-label="Restore drawing"><svg width="10" height="10"><path d="M3.500 3V1.500h6v4H7M.5 4h6v4.500h-6zM1 5h5M3 2h6" fill="none" stroke="#111"></path></svg></button>
        <button type="button" class="mdi" aria-label="Close drawing"><svg width="10" height="10"><path d="M2 2l6 6M8 2L2 8" stroke="#111" stroke-width="2"></path></svg></button>
      </nav>
      <div class="band"><tool-strip class="first" .items=${standardTools}></tool-strip></div>
      <div class="band"><tool-strip .items=${modifyTools}></tool-strip></div>

      <main class="main">
        <section class="side">
          <div class="picker">
            <select class="combo" aria-label="Selected object"><option>vdDocument(D:\\My Folders\\Technical\\Work Group\\Tapas Banerjee)</option></select>
            <svg width="8" height="5"><path d="M0 0h8L4 4.500z" fill="#111"></path></svg>
          </div>
          <div class="modes">
            <button type="button" class="on" aria-label="Categorized">${glyph("categories")}</button>
            <button type="button" aria-label="Alphabetical">${glyph("alpha")}</button><i></i>
            <button type="button" aria-label="Property pages">${glyph("pages")}</button>
          </div>
          <div class="gridbox">
            <table>
              <colgroup><col class="gutter"><col class="name"><col></colgroup>
              <tbody>${rows.map((r) => this.row(r))}</tbody>
            </table>
            <scroll-rail .before=${0} .size=${130} .after=${261}></scroll-rail>
          </div>
          <div class="help"><h2>ActiveDimStyle</h2><p>Get/Set the active dimstyle of the document.</p></div>
        </section>

        <section class="doc">
          <div class="view">
            <div class="canvas">
              <svg viewBox="349 96 825 505" preserveAspectRatio="xMidYMid meet" role="img" aria-label="Typical cross section">
                <defs><pattern id="dash" width="4" height="4" patternUnits="userSpaceOnUse"><path d="M0 4L4 0" stroke="#aaa"></path></pattern></defs>
                ${drawing}
                <text x="356" y="597" font-size="12">TYPE-G: Typical Cross Section in Through Cut</text>
              </svg>
            </div>
            <scroll-rail .before=${58} .size=${345} .after=${68}></scroll-rail>
          </div>
          <div class="foot">
            <button type="button" class="tab on">Model</button>
            <button type="button" class="tab">Layout1</button>
            <button type="button" class="tab">Layout2</button>
            <scroll-rail horizontal .before=${23} .size=${240} .after=${18}></scroll-rail>
          </div>
        </section>

        <aside class="dock">
          <tool-strip vertical .items=${drawTools}></tool-strip>
          <tool-strip vertical .items=${snapTools}></tool-strip>
        </aside>
      </main>

      <section class="bottom">
        <div class="console">
          <div class="history"><scroll-rail idle></scroll-rail></div>
          <div class="prompt"><label for="cmd">Command:</label><input id="cmd" type="text"></div>
        </div>
        <div class="preview">
          <div class="map">${this.miniMap()}</div>
          <div class="ctl">
            <button type="button" class="update">Update</button>
            <div class="slide">
              <input type="range" min="0" max="100" value="20" aria-label="Preview zoom">
              <div class="ticks"><i></i><i></i><i></i><i></i><i></i><i></i></div>
            </div>
          </div>
        </div>
      </section>

      <footer class="status">
        <tool-strip .items=${[":"]}></tool-strip>
        <output>32.3655 , 38.5267 , 0.0000</output>
        <button type="button">SNAP OFF</button>
        <button type="button">GRID OFF</button>
        <button type="button" class="on">ORTHO ON</button>
        <button type="button">OSNAP</button>
        <span class="meter"></span>
      </footer>
    </div>`;
  }
}
